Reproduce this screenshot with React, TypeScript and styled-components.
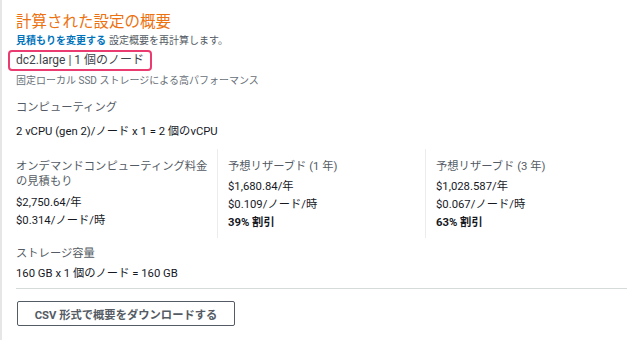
import React from "react";
import styled, { createGlobalStyle } from "styled-components";

const FONT = `Roboto, "Noto Sans CJK JP", sans-serif`;

const Global = createGlobalStyle`
  html, body { margin: 0; padding: 0; background: #fff; }
  body { font-family: ${FONT}; color: #16191f; }
`;

const Panel = styled.div`
  width: 640px;
  height: 340px;
  box-sizing: border-box;
  border-left: 2px solid #e6e6e6;
  padding: 12px 14px 0 14px;
  display: flex;
  flex-direction: column;
`;

const Title = styled.h2`
  margin: 0;
  font-size: 15.5px;
  line-height: 20px;
  font-weight: 400;
  color: #ec7211;
`;

const Hint = styled.div`
  margin-top: 2px;
  font-size: 10px;
  line-height: 14px;
  color: #545b64;
`;

const Link = styled.a`
  color: #0073bb;
  font-weight: 700;
  text-decoration: none;
  margin-right: 3px;
`;

const Highlight = styled.div`
  align-self: flex-start;
  margin: 2px 0 0 -8px;
  padding: 0 6px;
  border: 2px solid #ea3c70;
  border-radius: 4px;
  font-size: 12px;
  line-height: 17px;
  color: #3f434a;
`;

const Sub = styled.div`
  margin-top: 3px;
  font-size: 10px;
  line-height: 14px;
  color: #687078;
`;

const Label = styled.div<{ $top?: number }>`
  margin-top: ${(p) => p.$top ?? 0}px;
  font-size: 11.3px;
  line-height: 16px;
  color: #545b64;
`;

const Value = styled.div<{ $top?: number; $bold?: boolean }>`
  margin-top: ${(p) => p.$top ?? 0}px;
  font-size: 11.3px;
  line-height: 18px;
  color: #16191f;
  font-weight: ${(p) => (p.$bold ? 700 : 400)};
`;

const Columns = styled.div`
  margin-top: 8px;
  display: grid;
  grid-template-columns: 201px 208px 1fr;
  height: 89px;
`;

const Col = styled.div<{ $divider?: boolean }>`
  padding-left: ${(p) => (p.$divider ? "10px" : "0")};
  border-left: ${(p) => (p.$divider ? "1px solid #eaeded" : "none")};
  padding-top: 10px;
`;

const ColLabel = styled.div`
  font-size: 11.3px;
  line-height: 15px;
  color: #545b64;
`;

const Rule = styled.hr`
  margin: 5px 0 0 0;
  border: none;
  border-top: 1px solid #d5dbdb;
  width: 611px;
`;

const Button = styled.button`
  margin: 12px 0 0 1px;
  align-self: flex-start;
  width: 218px;
  height: 25px;
  background: #fff;
  border: 1px solid #545b64;
  border-radius: 2px;
  font-family: ${FONT};
  font-size: 11.3px;
  font-weight: 700;
  color: #545b64;
  padding: 0;
`;

const Block = styled.div`
  display: flex;
  flex-direction: column;
`;

export default function App() {
  return (
    <>
      <Global />
      <Panel>
        <Block>
          <Title>計算された設定の概要</Title>
          <Hint>
            <Link href="#">見積もりを変更する</Link>設定概要を再計算します。
          </Hint>
          <Highlight>dc2.large | 1 個のノード</Highlight>
          <Sub>固定ローカル SSD ストレージによる高パフォーマンス</Sub>
          <Label $top={12}>コンピューティング</Label>
          <Value $top={7}>2 vCPU (gen 2)/ノード x 1 = 2 個のvCPU</Value>
        </Block>
        <Columns>
          <Col>
            <ColLabel>オンデマンドコンピューティング料金<br />の見積もり</ColLabel>
            <Value $top={5}>$2,750.64/年</Value>
            <Value>$0.314/ノード/時</Value>
          </Col>
          <Col $divider>
            <ColLabel>予想リザーブド (1 年)</ColLabel>
            <Value $top={4}>$1,680.84/年</Value>
            <Value>$0.109/ノード/時</Value>
            <Value $bold>39% 割引</Value>
          </Col>
          <Col $divider>
            <ColLabel>予想リザーブド (3 年)</ColLabel>
            <Value $top={4}>$1,028.587/年</Value>
            <Value>$0.067/ノード/時</Value>
            <Value $bold>63% 割引</Value>
          </Col>
        </Columns>
        <Block>
          <Label $top={8}>ストレージ容量</Label>
          <Value $top={3}>160 GB x 1 個のノード = 160 GB</Value>
        </Block>
        <Rule />
        <Button>CSV 形式で概要をダウンロードする</Button>
      </Panel>
    </>
  );
}
